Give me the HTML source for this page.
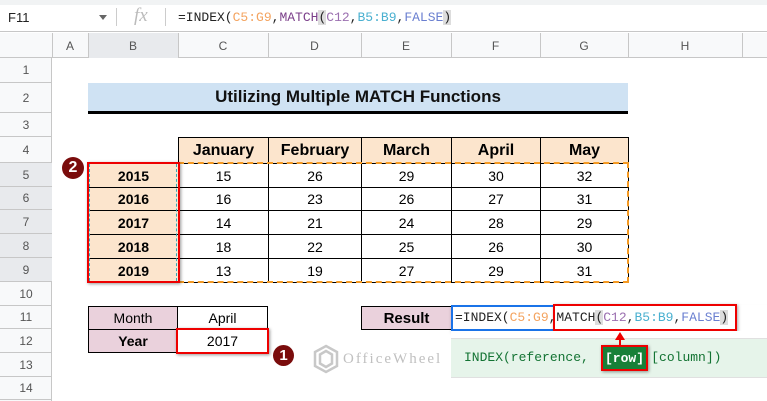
<!DOCTYPE html>
<html><head><meta charset="utf-8"><style>
*{margin:0;padding:0;box-sizing:border-box}
body{width:767px;height:401px;overflow:hidden;background:#fff;font-family:"Liberation Sans",Arial,sans-serif;position:relative}
.a{position:absolute}
.c{position:absolute;display:flex;align-items:center;justify-content:center;font-size:14px;color:#000}
.mono{font-family:"Liberation Mono",monospace}
.hl{position:absolute;background:#e2e3e3}
</style></head><body>
<!-- formula bar -->
<div class="a" style="left:0;top:0;width:767px;height:5px;background:#f1f3f4"></div>
<div class="a" style="left:0;top:5px;width:767px;height:27px;background:#fff;border-bottom:1px solid #c7c7c7"></div>
<div class="a" style="left:8px;top:10px;font-size:13px;color:#222">F11</div>
<div class="a" style="left:99px;top:15px;width:0;height:0;border-left:4px solid transparent;border-right:4px solid transparent;border-top:5px solid #666"></div>
<div class="a" style="left:116px;top:8px;width:1px;height:18px;background:#ccc"></div>
<div class="a" style="left:134px;top:5px;font-family:'Liberation Serif',serif;font-style:italic;font-size:19px;color:#bbb">fx</div>
<div class="a" style="left:165px;top:8px;width:1px;height:18px;background:#ccc"></div>
<div class="a mono" style="left:178px;top:10px;font-size:13px;color:#222;white-space:nowrap">=INDEX(<span style="color:#f4a460">C5:G9</span>,<span style="color:#7b3f8a">MATCH</span><span style="background:#ddd">(</span><span style="color:#9b6fb0">C12</span>,<span style="color:#4ab0d0">B5:B9</span>,<span style="color:#6a7fd0">FALSE</span><span style="background:#ddd">)</span></div>
<!-- column headers -->
<div class="a" style="left:0;top:33px;width:767px;height:25px;background:#f8f9fa;border-bottom:1px solid #c7c7c7"></div>
<div class="hl" style="left:88px;top:33px;width:90px;height:25px;background:#e8eaed"></div>
<div class="a" style="left:0;top:58px;width:52px;height:343px;background:#f8f9fa;border-right:1px solid #c7c7c7"></div>
<div class="hl" style="left:0;top:163px;width:52px;height:119px;background:#e8eaed"></div>
<div id="grid"></div>
<!-- title -->
<div class="c" style="left:88px;top:83px;width:540px;height:28px;background:#cfe2f3;font-weight:bold;font-size:17px;color:#111">Utilizing Multiple MATCH Functions</div>
<div class="a" style="left:88px;top:111px;width:540px;height:3px;background:#000"></div>
<div id="tbl"></div>
<!-- orange dashed -->
<div class="a" style="left:178px;top:162px;width:451px;height:121px;border:2px dashed #f59a23"></div>
<!-- red box B -->
<div class="a" style="left:87px;top:162px;width:93px;height:121px;border:2px solid #e00;box-shadow:1px 1px 3px rgba(0,0,0,.4)"></div>
<div class="a" style="left:89px;top:164px;width:1px;height:117px;border-left:1px dashed #3ab"></div>
<div class="a" style="left:176px;top:164px;width:1px;height:117px;border-left:1px dashed #3ab"></div>
<div class="c" style="left:62px;top:157px;width:22px;height:22px;border-radius:50%;background:#7a0c0c;color:#fff;font-weight:bold;font-size:16px">2</div>
<!-- Month/Year -->
<div class="c" style="left:88px;top:306px;width:90px;height:24px;background:#ead1dc;border:1px solid #000">Month</div>
<div class="c" style="left:177px;top:306px;width:91px;height:24px;background:#fff;border:1px solid #000">April</div>
<div class="c" style="left:88px;top:329px;width:90px;height:24px;background:#ead1dc;border:1px solid #000;font-weight:bold">Year</div>
<div class="c" style="left:177px;top:329px;width:91px;height:24px;background:#fff;border:1px solid #000">2017</div>
<div class="a" style="left:176px;top:328px;width:93px;height:26px;border:2px solid #e00;box-shadow:1px 1px 3px rgba(0,0,0,.4)"></div>
<div class="c" style="left:273px;top:345px;width:21px;height:21px;border-radius:50%;background:#7a0c0c;color:#fff;font-weight:bold;font-size:15px">1</div>
<!-- watermark -->
<svg class="a" style="left:312px;top:344px" width="28" height="30" viewBox="0 0 28 30"><path d="M14 2 L25 8 L25 22 L14 28 L3 22 L3 8 Z M14 7 L20 10.5 L20 19.5 L14 23 L8 19.5 L8 10.5 Z" fill="none" stroke="#c8c8c8" stroke-width="2.5"/></svg>
<div class="a" style="left:343px;top:351px;font-family:'Liberation Serif',serif;font-size:15px;letter-spacing:2px;color:#c0c0c0">OfficeWheel</div>
<!-- Result -->
<div class="c" style="left:361px;top:306px;width:91px;height:24px;background:#ead1dc;border:1px solid #000;font-weight:bold;font-size:15px">Result</div>
<div class="a" style="left:451px;top:305px;width:316px;height:26px;background:#fff;box-shadow:0 2px 3px rgba(0,0,0,.15)"></div>
<div class="a" style="left:451px;top:305px;width:102px;height:26px;border:2px solid #1a73e8;border-right:none"></div>
<div class="a mono" style="left:455px;top:310px;font-size:13px;color:#222;white-space:nowrap">=INDEX(<span style="color:#f4a460">C5:G9</span>,MATCH<span style="background:#ddd">(</span><span style="color:#9b6fb0">C12</span>,<span style="color:#4ab0d0">B5:B9</span>,<span style="color:#6a7fd0">FALSE</span><span style="background:#ddd">)</span></div>
<div class="a" style="left:553px;top:304px;width:184px;height:27px;border:2px solid #e00;box-shadow:1px 1px 3px rgba(0,0,0,.35)"></div>
<!-- tooltip -->
<div class="a" style="left:451px;top:331px;width:316px;height:70px;background:#fff"></div>
<div class="a" style="left:451px;top:338px;width:316px;height:40px;background:#e6f4ea;border-top:1px solid #e0e0e0;border-bottom:1px solid #e0e0e0"></div>
<div class="a mono" style="left:464px;top:350px;font-size:13px;color:#137333;white-space:nowrap">INDEX(reference, <span style="visibility:hidden">[row]</span>, [column])</div>
<div class="a mono" style="left:601px;top:345px;width:47px;height:26px;border:2px solid #e00;background:#188038;color:#fff;font-size:13px;display:flex;align-items:center;justify-content:center;font-weight:bold;box-shadow:1px 1px 3px rgba(0,0,0,.4)">[row]</div>
<div class="a" style="left:619px;top:339px;width:2px;height:6px;background:#e00"></div>
<div class="a" style="left:615px;top:332px;width:0;height:0;border-left:5px solid transparent;border-right:5px solid transparent;border-bottom:8px solid #e00"></div>
<script>
var cols=[0,52,88,178,268,361,451,540,628,742,767],names=["","A","B","C","D","E","F","G","H",""];
var rows=[58,83,113,137,163,187,210,234,258,282,306,329,353,377,400];
var g="";
for(var i=1;i<cols.length-1;i++){g+='<div class="a" style="left:'+cols[i]+'px;top:33px;width:1px;height:25px;background:#c7c7c7"></div>';
if(names[i])g+='<div class="c" style="left:'+cols[i]+'px;top:33px;width:'+(cols[i+1]-cols[i])+'px;height:25px;font-size:12px;color:#555">'+names[i]+'</div>';}
for(var r=0;r<rows.length-1;r++){g+='<div class="c" style="left:0;top:'+rows[r]+'px;width:52px;height:'+(rows[r+1]-rows[r])+'px;font-size:12px;color:#555;border-bottom:1px solid #c7c7c7">'+(r+1)+'</div>';}
document.getElementById("grid").innerHTML=g;
var t="",m=["January","February","March","April","May"];
var d=[[15,26,29,30,32],[16,23,26,27,31],[14,21,24,28,29],[18,22,25,26,30],[13,19,27,29,31]];
for(var j=0;j<5;j++){t+='<div class="c" style="left:'+cols[j+3]+'px;top:137px;width:'+(cols[j+4]-cols[j+3]+1)+'px;height:27px;background:#fce5cd;border:1px solid #000;font-weight:bold;font-size:16px">'+m[j]+'</div>';}
for(var r=0;r<5;r++){var y=rows[r+4],h=rows[r+5]-y+1;
t+='<div class="c" style="left:88px;top:'+y+'px;width:91px;height:'+h+'px;background:#fce5cd;border:1px solid #000;font-weight:bold;font-size:14px">'+(2015+r)+'</div>';
for(var j=0;j<5;j++)t+='<div class="c" style="left:'+cols[j+3]+'px;top:'+y+'px;width:'+(cols[j+4]-cols[j+3]+1)+'px;height:'+h+'px;background:#fff;border:1px solid #000;font-size:14px">'+d[r][j]+'</div>';}
document.getElementById("tbl").innerHTML=t;
</script>
</body></html>
